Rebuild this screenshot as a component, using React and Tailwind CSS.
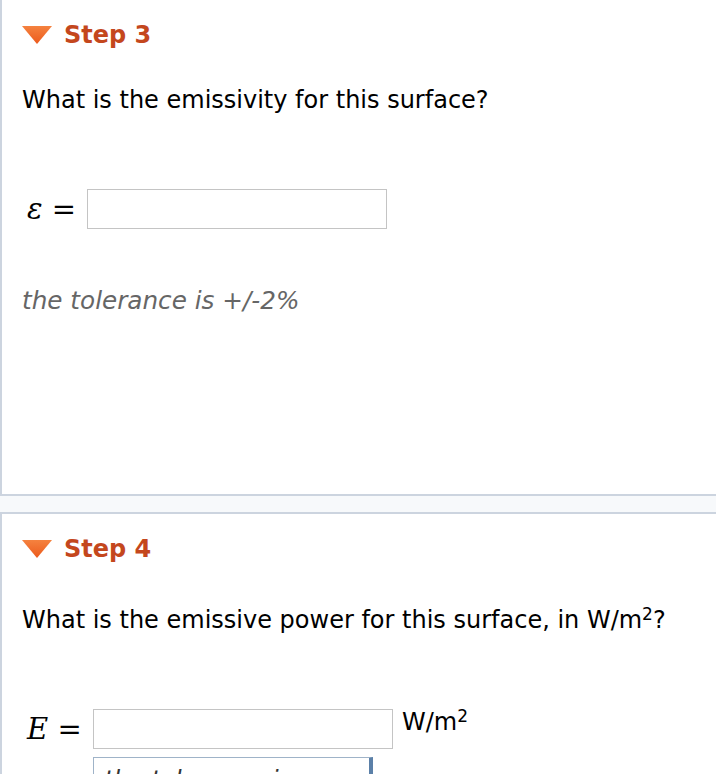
function Caret() {
  return (
    <svg width="30" height="18" viewBox="0 0 30 18" className="shrink-0">
      <defs>
        <linearGradient id="cg" x1="0" y1="0" x2="0" y2="1">
          <stop offset="0" stopColor="#f5823f" />
          <stop offset="1" stopColor="#ec5a1c" />
        </linearGradient>
      </defs>
      <polygon points="0,0 30,0 15,18" fill="url(#cg)" />
    </svg>
  );
}

function StepTitle({ label }) {
  return (
    <div className="flex h-[28px] items-center gap-3">
      <Caret />
      <span className="text-[24px] font-bold leading-[28px] text-[#c4471d]">{label}</span>
    </div>
  );
}

const serif = { fontFamily: '"DejaVu Serif", "Liberation Serif", serif' };

export default function App() {
  return (
    <div
      className="h-[774px] w-[716px] overflow-hidden bg-[#f7f9fb] text-black"
      style={{ fontFamily: '"DejaVu Sans", Verdana, sans-serif' }}
    >
      <section className="h-[496px] border-b-2 border-l-2 border-[#ccd4df] bg-white pl-5 pt-[21px]">
        <StepTitle label="Step 3" />
        <p className="mt-[37px] text-[24px] leading-[28px]">What is the emissivity for this surface?</p>
        <div className="mt-[75px] flex h-[40px] items-center">
          <span className="ml-[5px] w-[60px] text-[29px] leading-[40px]" style={serif}>
            <i>ε</i> =
          </span>
          <div className="h-[40px] w-[300px] border border-[#c4c4c4] bg-white" />
        </div>
        <p className="mt-[58px] text-[24.7px] italic leading-[28px] text-[#666]">the tolerance is +/-2%</p>
      </section>

      <section className="mt-[16px] h-[300px] border-l-2 border-t-2 border-[#ccd4df] bg-white pl-5 pt-[21px]">
        <StepTitle label="Step 4" />
        <p className="mt-[43px] text-[24px] leading-[28px]">
          What is the emissive power for this surface, in W/m<sup className="text-[17px]">2</sup>?
        </p>
        <div className="mt-[75px] flex h-[40px] items-center">
          <span className="ml-[5px] w-[66px] text-[29px] leading-[40px]" style={serif}>
            <i>E</i> =
          </span>
          <div className="h-[40px] w-[300px] border border-[#c4c4c4] bg-white" />
          <span className="ml-[9px] -mt-[14px] text-[24px] leading-[28px]">
            W/m<sup className="text-[17px]">2</sup>
          </span>
        </div>
        <div className="ml-[71px] mt-[8px] h-[40px] w-[280px] border border-r-4 border-[#9fb3c8] border-r-[#5b80a8] bg-white pl-[10px] pt-[8px] text-[24px] italic leading-[28px] text-[#333]">
          the tolerance is +/-2%
        </div>
      </section>
    </div>
  );
}
